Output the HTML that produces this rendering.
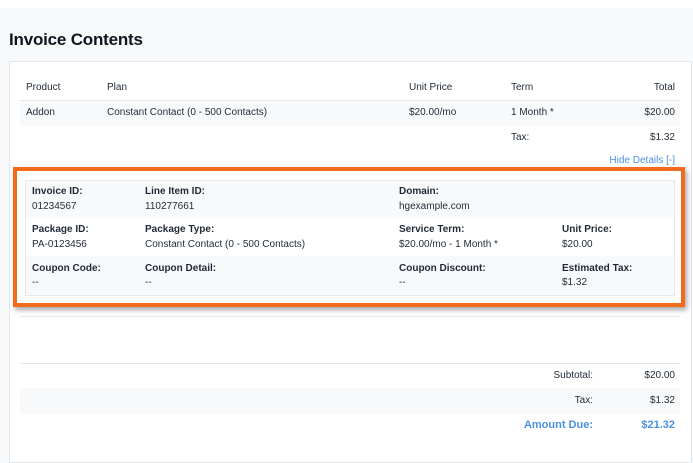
<!DOCTYPE html>
<html><head><style>
body{margin:0;width:693px;height:456px;background:#f8f9fb;position:relative;overflow:hidden;font-family:"Liberation Sans",Arial,sans-serif;color:#1f2a36;}
.a{position:absolute;white-space:nowrap;font-size:10px;}
.b{font-weight:bold;}
.r{text-align:right;}
</style></head><body>
<div style="position:absolute;left:0;top:0;width:693px;height:8px;background:#fff"></div>
<div class="a b" style="left:9px;top:30px;font-size:17px;color:#0e1620;letter-spacing:-0.2px">Invoice Contents</div>
<div style="position:absolute;left:9px;top:61px;width:681px;height:400px;background:#fff;border:1px solid #e4e7ec;"></div>
<div style="position:absolute;left:20px;top:100px;width:660px;height:1px;background:#e4e7ec"></div>
<div style="position:absolute;left:20px;top:101px;width:660px;height:25px;background:#f8f9fb"></div>
<div class="a" style="left:26px;top:82px">Product</div>
<div class="a" style="left:107px;top:82px">Plan</div>
<div class="a" style="left:409px;top:82px">Unit Price</div>
<div class="a" style="left:511px;top:82px">Term</div>
<div class="a r" style="right:18px;top:82px">Total</div>
<div class="a" style="left:26px;top:107px">Addon</div>
<div class="a" style="left:107px;top:107px">Constant Contact (0 - 500 Contacts)</div>
<div class="a" style="left:409px;top:107px">$20.00/mo</div>
<div class="a" style="left:511px;top:107px">1 Month *</div>
<div class="a" style="right:18px;top:107px">$20.00</div>
<div class="a" style="left:511px;top:132px">Tax:</div>
<div class="a" style="right:18px;top:132px">$1.32</div>
<div class="a" style="right:18px;top:155px;color:#4a90e2">Hide Details [-]</div>
<div style="position:absolute;left:13px;top:167px;width:664px;height:132px;border:4px solid #f26b1d;background:#fff;box-shadow:2px 3px 5px rgba(0,0,0,.35)"></div>
<div style="position:absolute;left:25px;top:180px;width:648px;height:114px;border:1px solid #e4e7ec;background:#f8f9fb"></div>
<div style="position:absolute;left:26px;top:218px;width:648px;height:38px;background:#fff"></div>
<div class="a b" style="left:32px;top:186px">Invoice ID:</div><div class="a" style="left:32px;top:201px">01234567</div>
<div class="a b" style="left:145px;top:186px">Line Item ID:</div><div class="a" style="left:145px;top:201px">110277661</div>
<div class="a b" style="left:399px;top:186px">Domain:</div><div class="a" style="left:399px;top:201px">hgexample.com</div>
<div class="a b" style="left:32px;top:224px">Package ID:</div><div class="a" style="left:32px;top:239px">PA-0123456</div>
<div class="a b" style="left:145px;top:224px">Package Type:</div><div class="a" style="left:145px;top:239px">Constant Contact (0 - 500 Contacts)</div>
<div class="a b" style="left:399px;top:224px">Service Term:</div><div class="a" style="left:399px;top:239px">$20.00/mo - 1 Month *</div>
<div class="a b" style="left:562px;top:224px">Unit Price:</div><div class="a" style="left:562px;top:239px">$20.00</div>
<div class="a b" style="left:32px;top:263px">Coupon Code:</div><div class="a" style="left:32px;top:277px">--</div>
<div class="a b" style="left:145px;top:263px">Coupon Detail:</div><div class="a" style="left:145px;top:277px">--</div>
<div class="a b" style="left:399px;top:263px">Coupon Discount:</div><div class="a" style="left:399px;top:277px">--</div>
<div class="a b" style="left:562px;top:263px">Estimated Tax:</div><div class="a" style="left:562px;top:277px">$1.32</div>
<div style="position:absolute;left:20px;top:316px;width:660px;height:1px;background:#e8eaee"></div>
<div style="position:absolute;left:20px;top:363px;width:660px;height:1px;background:#e4e7ec"></div>
<div style="position:absolute;left:20px;top:388px;width:660px;height:26px;background:#f8f9fb"></div>
<div class="a" style="right:100px;top:370px">Subtotal:</div><div class="a" style="right:18px;top:370px">$20.00</div>
<div class="a" style="right:100px;top:395px">Tax:</div><div class="a" style="right:18px;top:395px">$1.32</div>
<div class="a b" style="right:100px;top:419px;font-size:11px;color:#4a90e2">Amount Due:</div>
<div class="a b" style="right:18px;top:419px;font-size:11px;color:#4a90e2">$21.32</div>
</body></html>
